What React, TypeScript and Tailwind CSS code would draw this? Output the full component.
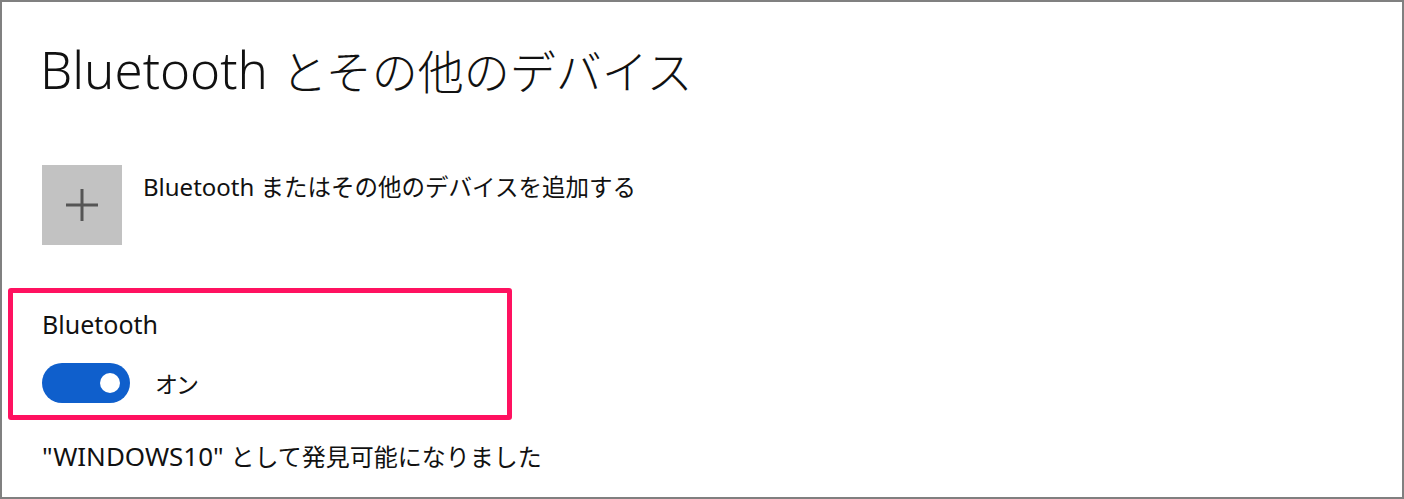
const latin = "font-['Noto_Sans','Noto_Sans_CJK_JP',sans-serif]";

function Ja({ className, children }: { className: string; children: string }) {
  return <span className={"font-['Noto_Sans_CJK_JP',sans-serif] " + className}>{children}</span>;
}

function Toggle({ on }: { on: boolean }) {
  return (
    <div
      className={
        "flex h-[40px] w-[88px] items-center rounded-full px-[10px] " +
        (on ? "justify-end bg-[#0f5fcc]" : "justify-start bg-white border-2 border-black")
      }
    >
      <div className="h-[20px] w-[20px] rounded-full bg-white" />
    </div>
  );
}

export default function App() {
  return (
    <div className={"h-[499px] w-[1404px] border-2 border-[#808080] bg-white text-[#111] " + latin}>
      <h1 className="ml-[38px] mt-[37px] whitespace-nowrap text-[51px] leading-[60px] font-light">
        Bluetooth <Ja className="text-[46px] font-light">とその他のデバイス</Ja>
      </h1>

      <div className="ml-[40px] mt-[66px] flex items-start gap-[21px]">
        <div className="flex h-[80px] w-[80px] items-center justify-center bg-[#c2c2c2]">
          <svg width="34" height="34" viewBox="0 0 34 34">
            <path d="M17 1v32M1 17h32" stroke="#555" strokeWidth="3" />
          </svg>
        </div>
        <p className="mt-[6px] whitespace-nowrap text-[24px] leading-[30px]">
          Bluetooth <Ja className="text-[23.5px]">またはその他のデバイスを追加する</Ja>
        </p>
      </div>

      <div className="ml-[6px] mt-[43px] w-[504px] rounded-[3px] border-[5px] border-[#ff1160] pb-[12px] pl-[29px] pt-[16px]">
        <p className="text-[25px] leading-[30px]">Bluetooth</p>
        <div className="mt-[24px] flex items-center gap-[25px]">
          <Toggle on />
          <Ja className="text-[23px] leading-[30px] tracking-[-2px]">オン</Ja>
        </div>
      </div>

      <p className="ml-[40px] mt-[20px] whitespace-nowrap text-[26px] leading-[32px]">
        "WINDOWS10" <Ja className="text-[24px]">として発見可能になりました</Ja>
      </p>
    </div>
  );
}
